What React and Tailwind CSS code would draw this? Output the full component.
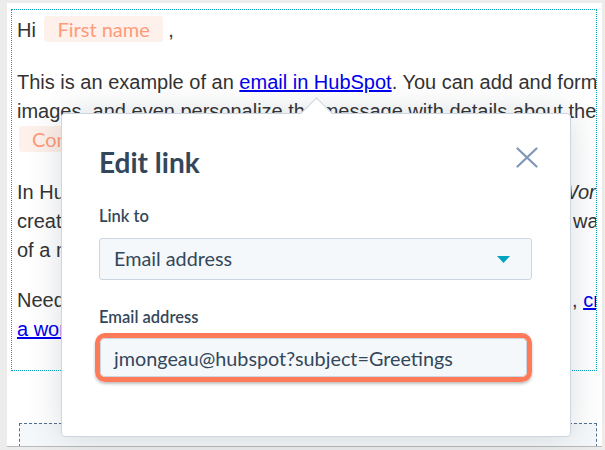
import React from "react";

// Email body behind the "Edit link" popover
function Token({ children, className = "" }) {
  return (
    <span
      className={`inline-block rounded-[3px] bg-[#fef0ea] px-[13px] leading-[26px] text-[#ff9b78] font-['Lato',sans-serif] text-[20px] ${className}`}
    >
      {children}
    </span>
  );
}

function EmailBody() {
  return (
    <div className="w-[586px] h-[362px] overflow-hidden border border-dotted border-[#00a4bd] pl-[5px] pt-[6px] font-['Liberation_Sans',Arial,sans-serif] text-[20px] leading-[29px] text-[#333333]">
      <p className="whitespace-nowrap">
        Hi <Token className="ml-[3px]">First name</Token> ,
      </p>

      <div className="mt-[23px] whitespace-nowrap">
        <div>
          This is an example of an{" "}
          <a className="text-[#0000ee] underline">email in HubSpot</a>. You can add and format text,
        </div>
        <div>images, and even personalize the message with details about the recipient,</div>
        <div>
          <Token className="ml-[2px]">Company name</Token>
        </div>
      </div>

      <div className="mt-[23px] whitespace-nowrap">
        <div className="flex">
          <span className="w-[542px] shrink-0 overflow-hidden">In HubSpot, you can also send emails like this one from</span>
          <i>Workflows</i>
        </div>
        <div className="flex">
          <span className="w-[556px] shrink-0 overflow-hidden">create automated follow-ups for your contacts in a</span>
          <span>way that</span>
        </div>
        <div>of a marketing campaign.</div>
      </div>

      <div className="mt-[21px] whitespace-nowrap">
        <div className="flex">
          <span className="w-[555px] shrink-0 overflow-hidden">Need help getting started? Learn how to edit an email</span>
          <span>
            , <a className="text-[#0000ee] underline">create</a>
          </span>
        </div>
        <div>
          <a className="text-[#0000ee] underline">a workflow</a>
        </div>
      </div>
    </div>
  );
}

function EditLinkPopover() {
  return (
    <div className="absolute left-[61px] top-[113px] w-[510px] h-[324px] rounded-[4px] border border-[#cbd6e2] bg-white shadow-[0_0_34px_0_rgba(45,62,80,0.18)] font-['Lato',sans-serif] text-[#33475b]">
      {/* arrow pointing at the link */}
      <div className="absolute left-[243px] -top-[12px] w-[23px] h-[23px] rotate-45 border-l border-t border-[#cbd6e2] bg-white" />

      <button className="absolute right-[32px] top-[33px] w-[22px] h-[21px] text-[#7c98b6]">
        <svg viewBox="0 0 22 21" width="22" height="21" fill="none" stroke="currentColor" strokeWidth="2.2" strokeLinecap="round">
          <path d="M1.5 1.5 L20.5 19.5 M20.5 1.5 L1.5 19.5" />
        </svg>
      </button>

      <div className="relative pl-[37px] pr-[38px] pt-[30px]">
        <h2 className="text-[28px] leading-[36px] font-bold">Edit link</h2>

        <div className="mt-[26px] text-[16.5px] leading-[20px] font-semibold">Link to</div>
        <div className="mt-[12px] flex h-[42px] w-[433px] items-center justify-between rounded-[3px] border border-[#cbd6e2] bg-[#f5f8fa] pl-[14px] pr-[21px] text-[19.8px]">
          <span>Email address</span>
          <svg width="13" height="7" viewBox="0 0 13 7">
            <path d="M0 0 H13 L6.5 7 Z" fill="#00a4bd" />
          </svg>
        </div>

        <div className="mt-[27px] text-[16.5px] leading-[20px] font-semibold">Email address</div>
        <div className="mt-[6px] -ml-[4px] h-[49px] w-[437px] rounded-[10px] border-[5px] border-[#ff7a59] shadow-[0_2px_3px_rgba(0,0,0,0.25)]">
          <div className="flex h-full items-center rounded-[5px] border border-[#cbd6e2] bg-[#f5f8fa] pl-[13px] pt-[3px] text-[19.8px]">
            jmongeau@hubspot?subject=Greetings
          </div>
        </div>
      </div>
    </div>
  );
}

export default function App() {
  return (
    <div className="relative w-[605px] h-[450px] overflow-hidden bg-[#ececec] pl-[7px] pt-[3px]">
      <div className="w-[595px] h-[444px] overflow-hidden border-b border-[#b9b9b9] bg-white pl-[4px] pt-[6px]">
        <EmailBody />
        <div className="ml-[8px] mt-[52px] h-[40px] w-[578px] border border-dashed border-[#516f90] bg-[#f5f8fa]" />
      </div>
      <EditLinkPopover />
    </div>
  );
}
